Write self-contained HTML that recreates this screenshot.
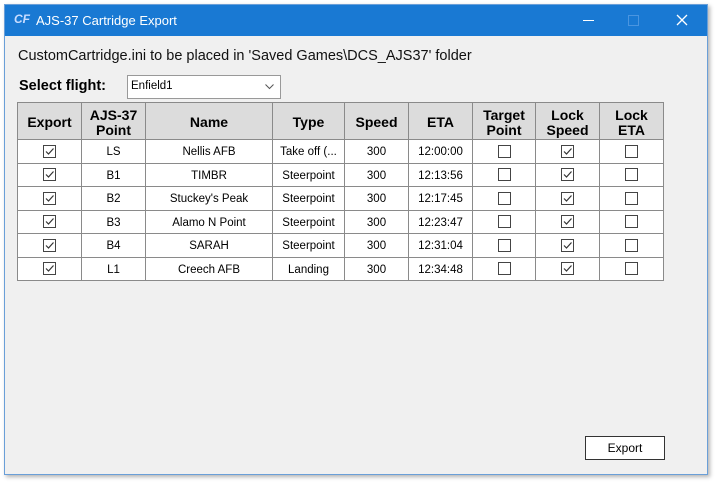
<!DOCTYPE html><html><head><style>
body{margin:0;width:720px;height:486px;background:#fff;position:relative;overflow:hidden;font-family:"Liberation Sans",sans-serif}
.win{position:absolute;left:4px;top:4px;width:702px;height:469px;background:#f0f0f0;border:1px solid #6a9fd8;box-shadow:2px 2px 4px rgba(0,0,0,.3)}
.tb{position:absolute;left:0;top:0;width:702px;height:31px;background:#1979d3;color:#fff;font-size:13px}
table{position:absolute;left:17px;top:102px;border-collapse:collapse;background:#fff}
td,th{border:1px solid #8a8a8a;text-align:center;padding:2px 0 0 0;font-size:11.5px;height:20.5px}
th{background:#dcdcdc;font-size:14px;line-height:15px;height:33px;font-weight:bold;padding-top:3px}
.cb{display:inline-block;width:11px;height:11px;border:1px solid #444;vertical-align:middle;background:#fff;position:relative;top:-1px}
.cb svg{display:block}
</style></head><body>
<div class="win">
<div class="tb"><span style="position:absolute;left:9px;top:7px;font-weight:bold;font-style:italic;color:#c8dcff;font-size:12px">CF</span><span style="position:absolute;left:31px;top:8px">AJS-37 Cartridge Export</span>
<span style="position:absolute;left:578px;top:15px;width:11px;height:1px;background:#fff"></span>
<span style="position:absolute;left:623px;top:10px;width:9px;height:9px;border:1px solid #4a95e0"></span>
<svg style="position:absolute;left:671px;top:9px" width="12" height="12"><path d="M1 1L11 11M11 1L1 11" stroke="#fff" stroke-width="1.3"/></svg></div>
<div style="position:absolute;left:13px;top:43px;font-size:14.5px;color:#111">CustomCartridge.ini to be placed in 'Saved Games\DCS_AJS37' folder</div>
<div style="position:absolute;left:14px;top:73px;font-size:14.5px;font-weight:bold">Select flight:</div>
<div style="position:absolute;left:122px;top:70px;width:152px;height:22px;background:#fff;border:1px solid #999;font-size:11.5px"><span style="position:absolute;left:3px;top:4px">Enfield1</span><svg style="position:absolute;right:6px;top:8px" width="9" height="6"><path d="M0.5 0.5L4.5 4.5L8.5 0.5" stroke="#555" fill="none"/></svg></div>
<div style="position:absolute;left:580px;top:431px;width:78px;height:22px;background:#fff;border:1px solid #333;font-size:12px;text-align:center;line-height:22px">Export</div>
</div>
<table>
<tr><th style="width:63px">Export</th><th style="width:63px">AJS-37<br>Point</th><th style="width:126px">Name</th><th style="width:71px">Type</th><th style="width:63px">Speed</th><th style="width:63px">ETA</th><th style="width:62px">Target<br>Point</th><th style="width:63px">Lock<br>Speed</th><th style="width:63px">Lock<br>ETA</th></tr>
<tr><td><span class="cb"><svg width="11" height="11"><path d="M2 5.5L4.5 8L9.5 2.5" stroke="#333" stroke-width="1.2" fill="none"/></svg></span></td><td>LS</td><td>Nellis AFB</td><td>Take off (...</td><td>300</td><td>12:00:00</td><td><span class="cb"></span></td><td><span class="cb"><svg width="11" height="11"><path d="M2 5.5L4.5 8L9.5 2.5" stroke="#333" stroke-width="1.2" fill="none"/></svg></span></td><td><span class="cb"></span></td></tr>
<tr><td><span class="cb"><svg width="11" height="11"><path d="M2 5.5L4.5 8L9.5 2.5" stroke="#333" stroke-width="1.2" fill="none"/></svg></span></td><td>B1</td><td>TIMBR</td><td>Steerpoint</td><td>300</td><td>12:13:56</td><td><span class="cb"></span></td><td><span class="cb"><svg width="11" height="11"><path d="M2 5.5L4.5 8L9.5 2.5" stroke="#333" stroke-width="1.2" fill="none"/></svg></span></td><td><span class="cb"></span></td></tr>
<tr><td><span class="cb"><svg width="11" height="11"><path d="M2 5.5L4.5 8L9.5 2.5" stroke="#333" stroke-width="1.2" fill="none"/></svg></span></td><td>B2</td><td>Stuckey's Peak</td><td>Steerpoint</td><td>300</td><td>12:17:45</td><td><span class="cb"></span></td><td><span class="cb"><svg width="11" height="11"><path d="M2 5.5L4.5 8L9.5 2.5" stroke="#333" stroke-width="1.2" fill="none"/></svg></span></td><td><span class="cb"></span></td></tr>
<tr><td><span class="cb"><svg width="11" height="11"><path d="M2 5.5L4.5 8L9.5 2.5" stroke="#333" stroke-width="1.2" fill="none"/></svg></span></td><td>B3</td><td>Alamo N Point</td><td>Steerpoint</td><td>300</td><td>12:23:47</td><td><span class="cb"></span></td><td><span class="cb"><svg width="11" height="11"><path d="M2 5.5L4.5 8L9.5 2.5" stroke="#333" stroke-width="1.2" fill="none"/></svg></span></td><td><span class="cb"></span></td></tr>
<tr><td><span class="cb"><svg width="11" height="11"><path d="M2 5.5L4.5 8L9.5 2.5" stroke="#333" stroke-width="1.2" fill="none"/></svg></span></td><td>B4</td><td>SARAH</td><td>Steerpoint</td><td>300</td><td>12:31:04</td><td><span class="cb"></span></td><td><span class="cb"><svg width="11" height="11"><path d="M2 5.5L4.5 8L9.5 2.5" stroke="#333" stroke-width="1.2" fill="none"/></svg></span></td><td><span class="cb"></span></td></tr>
<tr><td><span class="cb"><svg width="11" height="11"><path d="M2 5.5L4.5 8L9.5 2.5" stroke="#333" stroke-width="1.2" fill="none"/></svg></span></td><td>L1</td><td>Creech AFB</td><td>Landing</td><td>300</td><td>12:34:48</td><td><span class="cb"></span></td><td><span class="cb"><svg width="11" height="11"><path d="M2 5.5L4.5 8L9.5 2.5" stroke="#333" stroke-width="1.2" fill="none"/></svg></span></td><td><span class="cb"></span></td></tr>
</table>
</body></html>
